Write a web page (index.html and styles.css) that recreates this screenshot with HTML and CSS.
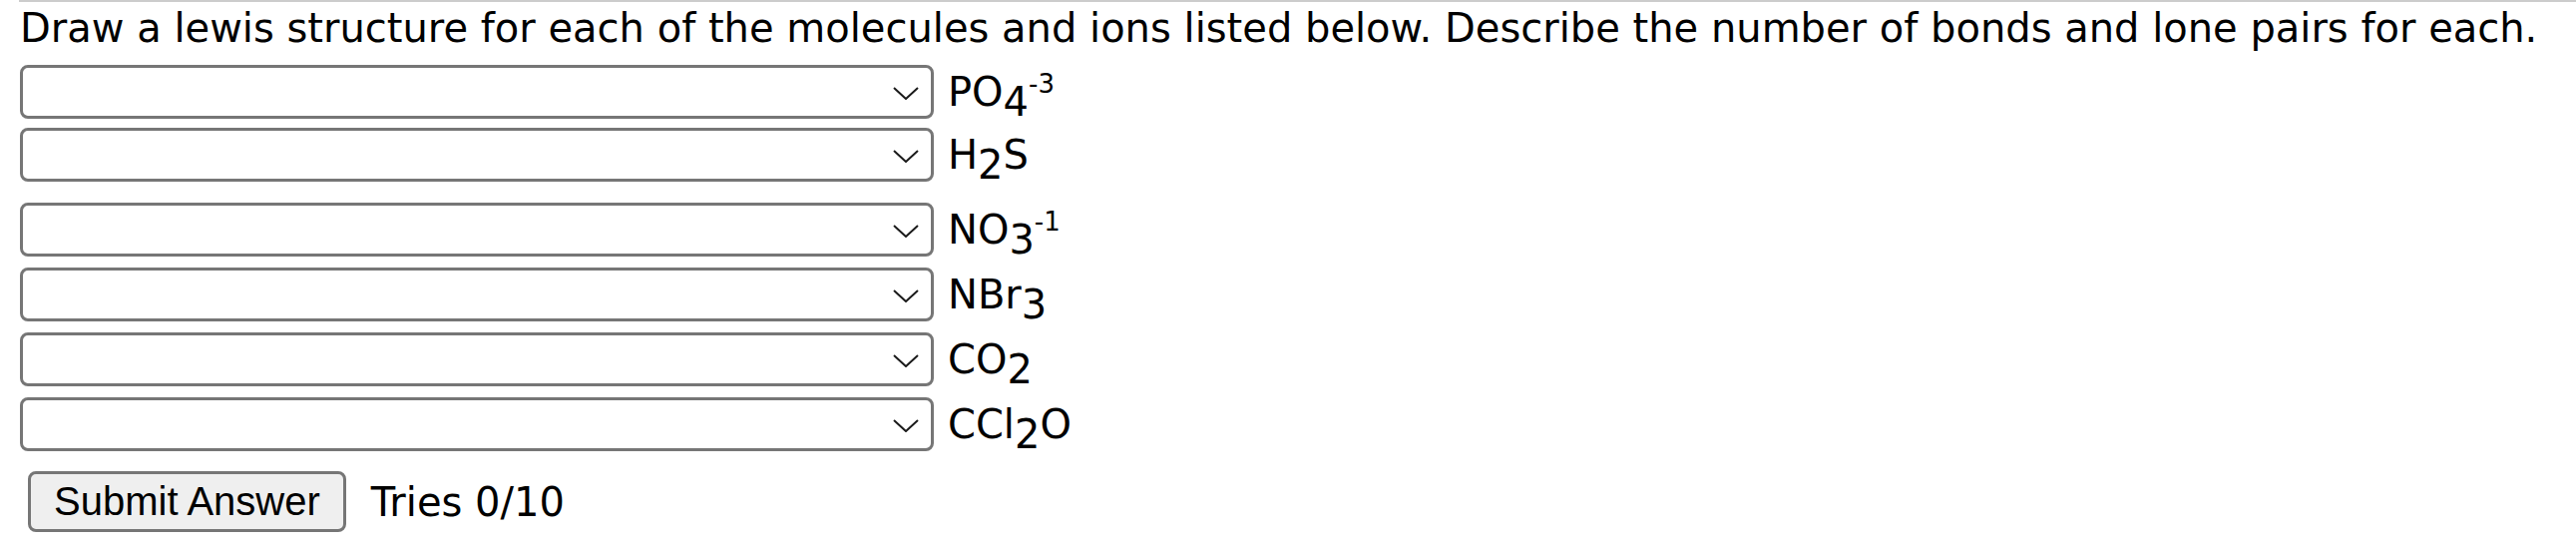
FILE: index.html
```html
<!DOCTYPE html>
<html>
<head>
<meta charset="utf-8">
<link rel="stylesheet" href="styles.css">
</head>
<body>
<div class="topline"></div>
<div class="page">
  <p class="prompt">Draw a lewis structure for each of the molecules and ions listed below. Describe the number of bonds and lone pairs for each.</p>
  <div class="rows">
    <div class="row r1">
      <div class="sel"><select></select><svg class="chev" viewBox="0 0 26 13"><polyline points="1,1 13,12 25,1"/></svg></div>
      <span class="label">PO<sub>4</sub><sup>-3</sup></span>
    </div>
    <div class="row r2">
      <div class="sel"><select></select><svg class="chev" viewBox="0 0 26 13"><polyline points="1,1 13,12 25,1"/></svg></div>
      <span class="label">H<sub>2</sub>S</span>
    </div>
    <div class="row r3">
      <div class="sel"><select></select><svg class="chev" viewBox="0 0 26 13"><polyline points="1,1 13,12 25,1"/></svg></div>
      <span class="label">NO<sub>3</sub><sup>-1</sup></span>
    </div>
    <div class="row r4">
      <div class="sel"><select></select><svg class="chev" viewBox="0 0 26 13"><polyline points="1,1 13,12 25,1"/></svg></div>
      <span class="label">NBr<sub>3</sub></span>
    </div>
    <div class="row r5">
      <div class="sel"><select></select><svg class="chev" viewBox="0 0 26 13"><polyline points="1,1 13,12 25,1"/></svg></div>
      <span class="label">CO<sub>2</sub></span>
    </div>
    <div class="row r6">
      <div class="sel"><select></select><svg class="chev" viewBox="0 0 26 13"><polyline points="1,1 13,12 25,1"/></svg></div>
      <span class="label">CCl<sub>2</sub>O</span>
    </div>
  </div>
  <div class="actions">
    <button class="submit" type="button">Submit Answer</button>
    <span class="tries">Tries 0/10</span>
  </div>
</div>
</body>
</html>
```

FILE: styles.css
```css
html, body {
  margin: 0;
  padding: 0;
  background: #ffffff;
}

body {
  font-family: "DejaVu Sans", Verdana, sans-serif;
  font-size: 40px;
  color: #000000;
}

.topline {
  margin-left: 19px;
  height: 2px;
  background: #cccccc;
}

.page {
  padding-left: 20px;
}

.prompt {
  margin: 2px 0 0 0;
  line-height: 48px;
  white-space: nowrap;
}

.rows {
  display: flex;
  flex-direction: column;
}

.row {
  display: flex;
  align-items: center;
  height: 54px;
}

.r1 { margin-top: 13px; }
.r2 { margin-top: 9px; }
.r3 { margin-top: 21px; }
.r4 { margin-top: 11px; }
.r5 { margin-top: 11px; }
.r6 { margin-top: 11px; }

.sel {
  position: relative;
  width: 916px;
  height: 54px;
}

.sel select {
  display: block;
  box-sizing: border-box;
  width: 100%;
  height: 100%;
  margin: 0;
  -webkit-appearance: none;
  appearance: none;
  background: #ffffff;
  border: 3px solid #767676;
  border-radius: 8px;
  outline: none;
}

.chev {
  position: absolute;
  right: 15px;
  top: 22px;
  width: 26px;
  height: 13px;
  fill: none;
  stroke: #1a1a1a;
  stroke-width: 2;
}

.label {
  margin-left: 14px;
  line-height: 48px;
  white-space: nowrap;
}

.label sub {
  font-size: 40px;
  vertical-align: -10px;
  line-height: 0;
}

.label sup {
  font-size: 26px;
  vertical-align: 13px;
  line-height: 0;
}

.actions {
  display: flex;
  align-items: center;
  margin-top: 20px;
  padding-left: 8px;
}

.submit {
  box-sizing: border-box;
  height: 61px;
  padding: 0 23px;
  margin: 0;
  font-family: "Liberation Sans", Arial, sans-serif;
  font-size: 40px;
  color: #000000;
  background: #efefef;
  border: 3px solid #767676;
  border-radius: 8px;
}

.tries {
  margin-left: 25px;
}
```
